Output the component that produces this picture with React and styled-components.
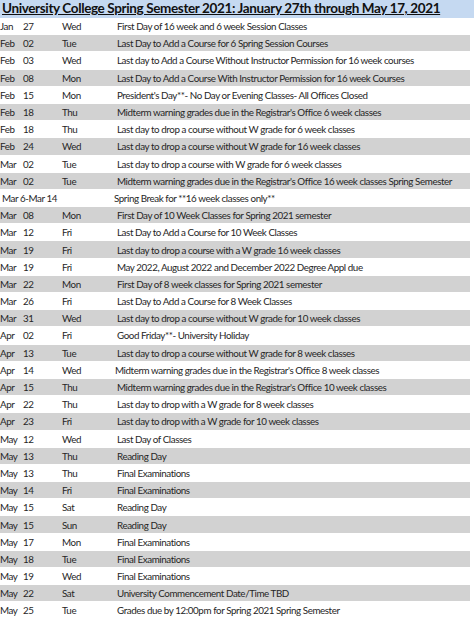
import React from "react";
import styled, { createGlobalStyle } from "styled-components";

const GlobalStyle = createGlobalStyle`
    html, body {
        margin: 0;
        padding: 0;
        background: #ffffff;
    }
    body {
        width: 474px;
        height: 620px;
        overflow: hidden;
        font-family: Lato, "Open Sans", sans-serif;
        color: #262626;
    }
`;

const Sheet = styled.div`
    display: flex;
    flex-direction: column;
    width: 474px;
`;

const Title = styled.h1`
    margin: 0;
    height: 18px;
    padding-left: 2px;
    background: #c5d9f1;
    font-size: 13.5px;
    font-weight: 700;
    line-height: 17px;
    letter-spacing: -0.37px;
    text-decoration: underline;
    text-underline-offset: 1px;
    color: #111;
    white-space: nowrap;
`;

const Row = styled.div`
    display: grid;
    grid-template-columns: 23px 39px 55px 1fr;
    align-items: center;
    width: 470px;
    height: 17.2px;
    box-sizing: border-box;
    border-bottom: 1px solid #fff;
    background: ${(p) => (p.$shade ? "#d2d2d2" : "#ffffff")};
    font-size: 9.8px;
    letter-spacing: -0.42px;
    white-space: nowrap;
    overflow: hidden;
`;

const Cell = styled.span`
    padding-left: ${(p) => p.$pad || 0}px;
`;

const Span = styled.span`
    grid-column: 1 / 4;
    padding-left: 2px;
`;

const Desc = styled.span`
    margin-left: ${(p) => p.$shift || 0}px;
`;

const events = [
    ["Jan", "27", "Wed", "First Day of 16 week and 6 week Session Classes"],
    ["Feb", "02", "Tue", "Last Day to Add a Course for 6 Spring Session Courses"],
    ["Feb", "03", "Wed", "Last day to Add a Course Without Instructor Permission for 16 week courses"],
    ["Feb", "08", "Mon", "Last Day to Add a Course With Instructor Permission for 16 week Courses"],
    ["Feb", "15", "Mon", "President's Day**-  No Day or Evening Classes- All Offices Closed"],
    ["Feb", "18", "Thu", "Midterm warning grades due in the Registrar's Office 6 week classes"],
    ["Feb", "18", "Thu", "Last day to drop a course without W grade for 6 week classes"],
    ["Feb", "24", "Wed", "Last day to drop a course without W grade for 16 week classes"],
    ["Mar", "02", "Tue", "Last day to drop a course with W grade for 6 week classes"],
    ["Mar", "02", "Tue", "Midterm warning grades due in the Registrar's Office 16 week classes Spring Semester"],
    ["Mar 6-Mar 14", null, null, "Spring Break for **16 week classes only**"],
    ["Mar", "08", "Mon", "First Day of 10 Week Classes for Spring 2021 semester"],
    ["Mar", "12", "Fri", "Last Day to Add a Course for 10 Week Classes"],
    ["Mar", "19", "Fri", "Last day to drop a course with a W grade 16 week classes"],
    ["Mar", "19", "Fri", "May 2022, August 2022 and December 2022 Degree Appl due"],
    ["Mar", "22", "Mon", "First Day of 8 week classes for Spring 2021 semester"],
    ["Mar", "26", "Fri", "Last Day to Add a Course for 8 Week Classes"],
    ["Mar", "31", "Wed", "Last day to drop a course without W grade for 10 week classes"],
    ["Apr", "02", "Fri", "Good Friday**- University Holiday"],
    ["Apr", "13", "Tue", "Last day to drop a course without W grade for 8 week classes"],
    ["Apr", "14", "Wed", "Midterm warning grades due in the Registrar's Office 8 week classes", -2],
    ["Apr", "15", "Thu", "Midterm warning grades due in the Registrar's Office 10 week classes"],
    ["Apr", "22", "Thu", "Last day to drop with a W grade for 8 week classes"],
    ["Apr", "23", "Fri", "Last day to drop with a W grade for 10 week classes"],
    ["May", "12", "Wed", "Last Day of Classes"],
    ["May", "13", "Thu", "Reading Day"],
    ["May", "13", "Thu", "Final Examinations"],
    ["May", "14", "Fri", "Final Examinations"],
    ["May", "15", "Sat", "Reading Day"],
    ["May", "15", "Sun", "Reading Day"],
    ["May", "17", "Mon", "Final Examinations"],
    ["May", "18", "Tue", "Final Examinations"],
    ["May", "19", "Wed", "Final Examinations"],
    ["May", "22", "Sat", "University Commencement Date/Time TBD"],
    ["May", "25", "Tue", "Grades due by 12:00pm for Spring 2021 Spring Semester"],
];

export default function App() {
    return (
        <>
            <GlobalStyle />
            <Sheet>
                <Title>University College Spring Semester 2021: January 27th through May 17, 2021</Title>
                {events.map(([month, day, weekday, text, shift], i) => (
                    <Row key={i} $shade={i % 2 === 1}>
                        {day === null ? (
                            <Span>{month}</Span>
                        ) : (
                            <>
                                <Cell>{month}</Cell>
                                <Cell>{day}</Cell>
                                <Cell>{weekday}</Cell>
                            </>
                        )}
                        <Desc $shift={day === null ? -3 : shift}>{text}</Desc>
                    </Row>
                ))}
            </Sheet>
        </>
    );
}
